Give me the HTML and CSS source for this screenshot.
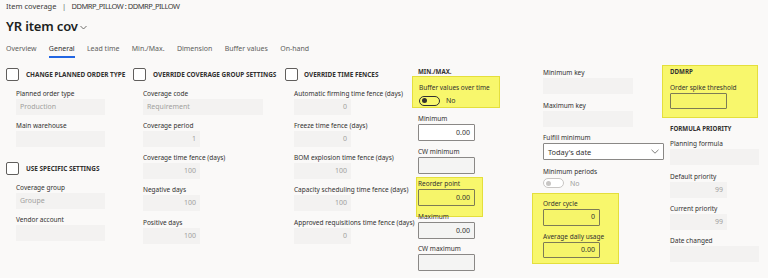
FILE: index.html
```html
<!DOCTYPE html>
<html lang="en">
<head>
<meta charset="utf-8">
<title>Item coverage</title>
<link rel="stylesheet" href="styles.css">
</head>
<body>
<div class="page">
  <div class="crumb">Item coverage <span class="sep">|</span> <span class="crumb-id">DDMRP_PILLOW : DDMRP_PILLOW</span></div>
  <div class="title"><span>YR item cov</span><svg class="title-chev" width="7" height="5" viewBox="0 0 7 5"><path d="M0.5 1 L3.5 4 L6.5 1" fill="none" stroke="#605e5c" stroke-width="0.9"/></svg></div>
  <nav class="tabs">
    <span class="tab">Overview</span>
    <span class="tab active">General</span>
    <span class="tab">Lead time</span>
    <span class="tab">Min./Max.</span>
    <span class="tab">Dimension</span>
    <span class="tab">Buffer values</span>
    <span class="tab">On-hand</span>
  </nav>

  <div class="cols">
    <section class="col c1">
      <div class="group-head"><span class="cb"></span><span class="gh-text">CHANGE PLANNED ORDER TYPE</span></div>
      <div class="fields">
        <div class="field"><div class="lbl">Planned order type</div><div class="inp w89">Production</div></div>
        <div class="field"><div class="lbl">Main warehouse</div><div class="inp w89"></div></div>
      </div>
      <div class="group-head second"><span class="cb"></span><span class="gh-text">USE SPECIFIC SETTINGS</span></div>
      <div class="fields">
        <div class="field"><div class="lbl">Coverage group</div><div class="inp w89">Groupe</div></div>
        <div class="field"><div class="lbl">Vendor account</div><div class="inp w89"></div></div>
      </div>
    </section>

    <section class="col c2">
      <div class="group-head"><span class="cb"></span><span class="gh-text">OVERRIDE COVERAGE GROUP SETTINGS</span></div>
      <div class="fields">
        <div class="field"><div class="lbl">Coverage code</div><div class="inp w120">Requirement</div></div>
        <div class="field"><div class="lbl">Coverage period</div><div class="inp w57 num">1</div></div>
        <div class="field"><div class="lbl">Coverage time fence (days)</div><div class="inp w57 num">100</div></div>
        <div class="field"><div class="lbl">Negative days</div><div class="inp w57 num">100</div></div>
        <div class="field"><div class="lbl">Positive days</div><div class="inp w57 num">100</div></div>
      </div>
    </section>

    <section class="col c3">
      <div class="group-head"><span class="cb"></span><span class="gh-text">OVERRIDE TIME FENCES</span></div>
      <div class="fields">
        <div class="field"><div class="lbl">Automatic firming time fence (days)</div><div class="inp w57 num">0</div></div>
        <div class="field"><div class="lbl">Freeze time fence (days)</div><div class="inp w57 num">0</div></div>
        <div class="field"><div class="lbl">BOM explosion time fence (days)</div><div class="inp w57 num">100</div></div>
        <div class="field"><div class="lbl">Capacity scheduling time fence (days)</div><div class="inp w57 num">100</div></div>
        <div class="field"><div class="lbl">Approved requisitions time fence (days)</div><div class="inp w57 num">0</div></div>
      </div>
    </section>

    <section class="col c4">
      <div class="sec-title">MIN./MAX.</div>
      <div class="hl hl-buffer">
        <div class="lbl">Buffer values over time</div>
        <div class="toggle-row"><span class="toggle"><span class="knob"></span></span><span class="tog-text">No</span></div>
      </div>
      <div class="field f-min"><div class="lbl">Minimum</div><div class="inp edit white w57 num">0.00</div></div>
      <div class="field"><div class="lbl">CW minimum</div><div class="inp edit w57"></div></div>
      <div class="hl hl-reorder">
        <div class="lbl">Reorder point</div>
        <div class="inp edit yellow w57 num">0.00</div>
      </div>
      <div class="field f-max"><div class="lbl">Maximum</div><div class="inp edit w57 num">0.00</div></div>
      <div class="field"><div class="lbl">CW maximum</div><div class="inp edit w57"></div></div>
    </section>

    <section class="col c5">
      <div class="field"><div class="lbl">Minimum key</div><div class="inp w90"></div></div>
      <div class="field"><div class="lbl">Maximum key</div><div class="inp w90"></div></div>
      <div class="field"><div class="lbl">Fulfill minimum</div>
        <div class="select"><span>Today's date</span><svg width="8" height="5" viewBox="0 0 8 5"><path d="M0.5 0.8 L4 4.2 L7.5 0.8" fill="none" stroke="#605e5c" stroke-width="0.8"/></svg></div>
      </div>
      <div class="field"><div class="lbl">Minimum periods</div>
        <div class="toggle-row"><span class="toggle off"><span class="knob"></span></span><span class="tog-text dim">No</span></div>
      </div>
      <div class="hl hl-cycle">
        <div class="field"><div class="lbl">Order cycle</div><div class="inp edit yellow w57 num">0</div></div>
        <div class="field"><div class="lbl">Average daily usage</div><div class="inp edit yellow w57 num">0.00</div></div>
      </div>
    </section>

    <section class="col c6">
      <div class="hl hl-ddmrp">
        <div class="sec-title">DDMRP</div>
        <div class="lbl">Order spike threshold</div>
        <div class="inp edit yellow w57"></div>
      </div>
      <div class="sec-title formula">FORMULA PRIORITY</div>
      <div class="field"><div class="lbl">Planning formula</div><div class="inp w89"></div></div>
      <div class="field"><div class="lbl">Default priority</div><div class="inp w57 num">99</div></div>
      <div class="field"><div class="lbl">Current priority</div><div class="inp w57 num">99</div></div>
      <div class="field"><div class="lbl">Date changed</div><div class="inp w89"></div></div>
    </section>
  </div>
</div>
</body>
</html>
```

FILE: styles.css
```css
* { box-sizing: border-box; }
html, body { margin: 0; padding: 0; }
body {
  background: #faf9f8;
  font-family: "Segoe UI", "Noto Sans", sans-serif;
  color: #323130;
  width: 768px;
  height: 278px;
  overflow: hidden;
}
.page { padding: 0 0 0 6px; }

.crumb {
  height: 13px;
  line-height: 13px;
  font-size: 7.5px;
  color: #3b3a39;
  white-space: nowrap;
}
.crumb .sep { margin: 0 3.5px; color: #605e5c; }
.crumb-id { letter-spacing: -0.5px; }

.title {
  height: 22px;
  margin-top: 2px;
  display: flex;
  align-items: center;
  font-size: 13px;
  font-weight: 600;
  color: #201f1e;
  letter-spacing: -0.15px;
  white-space: nowrap;
}
.title-chev { margin-left: 2.5px; margin-top: 3px; }

.tabs {
  display: flex;
  gap: 12.3px;
  margin-top: 4px;
  height: 17px;
}
.tab {
  font-size: 7px;
  color: #605e5c;
  line-height: 15px;
  height: 17px;
  border-bottom: 2px solid transparent;
  white-space: nowrap;
}
.tab.active { color: #323130; border-bottom-color: #2266e3; }

.cols {
  display: grid;
  grid-template-columns: 127px 152px 127px 120px 130px 1fr;
}
.col { display: flex; flex-direction: column; }

.group-head {
  display: flex;
  align-items: center;
  height: 13px;
  margin-top: 10px;
}
.group-head.second { margin-top: 10px; }
.cb {
  width: 13px;
  height: 13px;
  border: 1px solid #605e5c;
  border-radius: 2px;
  background: #ffffff;
  flex: none;
}
.gh-text {
  margin-left: 7px;
  font-size: 6.4px;
  font-weight: 700;
  color: #323130;
  white-space: nowrap;
}
.c3 .gh-text { margin-left: 6px; }

.fields {
  display: flex;
  flex-direction: column;
  padding-left: 10px;
  margin-top: 6.5px;
}
.group-head.second + .fields { margin-top: 7px; }
.c3 .fields { padding-left: 9px; }

.field { display: flex; flex-direction: column; margin-bottom: 5.25px; }
.lbl {
  height: 11px;
  line-height: 11px;
  font-size: 6.5px;
  color: #323130;
  white-space: nowrap;
}
.inp {
  height: 16px;
  background: #f3f2f1;
  font-size: 7px;
  color: #a19f9d;
  line-height: 16px;
  padding: 0 4px;
  white-space: nowrap;
}
.inp.num { text-align: right; }
.w57 { width: 57px; }
.w89 { width: 89px; }
.w90 { width: 90px; }
.w120 { width: 120px; }

.inp.edit {
  height: 17px;
  line-height: 15px;
  border: 1px solid #8a8886;
  border-radius: 1px;
  color: #323130;
  background: #f4f4f3;
}
.inp.edit.white { background: #ffffff; }
.inp.edit.yellow { background: #f6f56a; border-color: #7d7b55; }

.sec-title {
  font-size: 6.2px;
  font-weight: 700;
  line-height: 11px;
  height: 11px;
  color: #323130;
  white-space: nowrap;
}

.hl {
  background: #f8f76c;
  border: 1px solid #e4df3c;
}

.toggle-row { display: flex; align-items: center; height: 11px; }
.toggle {
  width: 21px;
  height: 10px;
  border: 1px solid #323130;
  border-radius: 5px;
  position: relative;
  flex: none;
}
.toggle .knob {
  position: absolute;
  left: 1.5px;
  top: 1.5px;
  width: 5px;
  height: 5px;
  border-radius: 50%;
  background: #323130;
}
.toggle.off { border-color: #c8c6c4; background: #ffffff; }
.toggle.off .knob { background: #c8c6c4; }
.tog-text { font-size: 7px; color: #323130; margin-left: 6px; }
.tog-text.dim { color: #a19f9d; }

/* column 4 */
.c4 { padding-top: 7.5px; }
.c4 > .sec-title, .c4 > .field { margin-left: 6px; }
.c4 .lbl { height: 10px; line-height: 10px; }
.c4 .field { margin-bottom: 5.6px; }
.hl-buffer {
  width: 88px;
  height: 32.6px;
  margin-top: -0.8px;
  padding: 5.6px 0 0 6px;
}
.hl-buffer .lbl { height: 11px; line-height: 11px; }
.hl-buffer .toggle-row { margin-top: 2px; }
.c4 .f-min { margin-top: 5.9px; }
.hl-reorder {
  width: 67px;
  height: 39.7px;
  margin: -2px 0 0 4px;
  padding: 0.5px 0 0 1px;
}
.c4 .f-max { margin-top: -5.5px; }

/* column 5 */
.c5 { padding-left: 11px; padding-top: 9.2px; }
.c5 .field { margin-bottom: 5.5px; }
.select {
  width: 121px;
  height: 17px;
  background: #ffffff;
  border: 1px solid #8a8886;
  border-radius: 1px;
  display: flex;
  align-items: center;
  justify-content: space-between;
  padding: 0 4px;
  font-size: 7.4px;
  color: #323130;
}
.c5 .toggle-row { margin-top: 1.3px; }
.c5 .field:nth-child(4) { margin-bottom: 4.4px; }
.hl-cycle {
  width: 87px;
  height: 70.6px;
  margin-left: -11px;
  padding: 4px 0 0 10px;
}
.hl-cycle .field { margin-bottom: 5.4px; }
.hl-cycle .inp.edit { height: 16.3px; line-height: 14.3px; }

/* column 6 */
.c6 { padding-top: 7px; }
.hl-ddmrp {
  width: 96px;
  height: 52.7px;
  padding: 0 0 0 7px;
}
.hl-ddmrp .lbl { margin-top: 4.6px; }
.hl-ddmrp .inp.edit { height: 16px; line-height: 14px; }
.c6 > .sec-title, .c6 > .field { margin-left: 8px; }
.c6 > .sec-title.formula { margin-top: 5.1px; }
.c6 > .field { margin-bottom: 5.3px; }
.c6 > .sec-title.formula + .field { margin-top: 4.7px; }
```
